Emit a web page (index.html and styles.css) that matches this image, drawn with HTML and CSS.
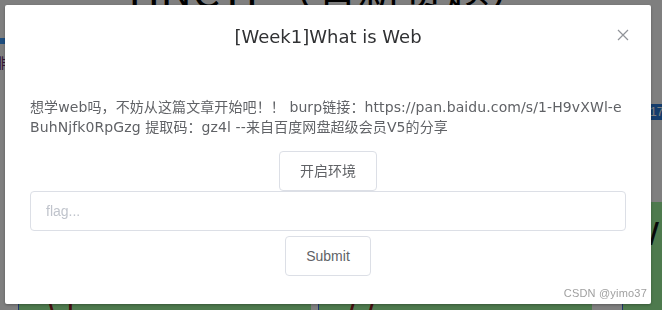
FILE: index.html
```html
<!DOCTYPE html>
<html lang="zh-CN">
<head>
<meta charset="utf-8">
<title>[Week1]What is Web</title>
<link rel="stylesheet" href="styles.css">
</head>
<body>
<div class="page">
  <h1 class="page-title">HNCTF（有新赛题）</h1>
  <div class="nav"></div>
  <div class="info-row">
    <span class="side-text">排</span>
    <span class="badge">17</span>
  </div>
  <div class="cards">
    <div class="card"><span class="card-glyph red">\ |</span></div>
    <div class="card"><span class="card-glyph red">/ /</span></div>
    <div class="card-gap"></div>
    <div class="card card-right"><span class="card-glyph">W</span></div>
  </div>
</div>

<div class="overlay"></div>

<div class="dialog-wrapper">
  <div class="dialog">
    <div class="dialog-header">
      <span class="dialog-title">[Week1]What is Web</span>
      <button class="dialog-close" aria-label="Close">
        <svg width="12" height="12" viewBox="0 0 12 12"><path d="M1 1L11 11M11 1L1 11" stroke="#909399" stroke-width="1.2" fill="none"/></svg>
      </button>
    </div>
    <div class="dialog-body">
      <p class="desc">想学web吗，不妨从这篇文章开始吧！！ burp链接：https://pan.baidu.com/s/1-H9vXWl-eBuhNjfk0RpGzg 提取码：gz4l --来自百度网盘超级会员V5的分享</p>
      <div class="center"><button class="btn">开启环境</button></div>
      <input class="input" type="text" placeholder="flag...">
      <div class="center"><button class="btn btn-submit">Submit</button></div>
    </div>
  </div>
</div>

<div class="watermark">CSDN @yimo37</div>
</body>
</html>
```

FILE: styles.css
```css
* { box-sizing: border-box; }
html, body { margin: 0; padding: 0; }
body {
  width: 662px;
  height: 310px;
  overflow: hidden;
  background: #ffffff;
  font-family: "DejaVu Sans", "Noto Sans CJK SC", sans-serif;
}

/* background page */
.page { width: 662px; }
.page-title {
  margin: -34px 0 0;
  height: 72px;
  font-family: "Noto Sans CJK SC", sans-serif;
  font-weight: 400;
  font-size: 44px;
  line-height: 1;
  text-align: center;
  color: #000;
}
.nav {
  width: 320px;
  height: 6px;
  background: #3e9cfe;
}
.info-row {
  display: flex;
  justify-content: space-between;
  align-items: flex-start;
  height: 158px;
  padding-top: 8px;
}
.side-text {
  font-family: "Noto Sans CJK SC", sans-serif;
  font-size: 14px;
  color: #6a2a6a;
  margin-left: -8px;
}
.badge {
  margin-top: 52px;
  background: #2a7ad8;
  color: #fff;
  font-family: "Liberation Sans", sans-serif;
  font-size: 12px;
  padding: 1px 2px 1px 4px;
  width: 16px;
  height: 16px;
  line-height: 14px;
}
.cards {
  display: flex;
  gap: 7px;
  padding-left: 18px;
}
.card {
  width: 308px;
  height: 120px;
  background: #9cf59c;
  border-left: 1px solid #3e6cd8;
  overflow: hidden;
}
.card + .card { width: 288px; }
.card-gap {
  width: 24px;
  flex: none;
  margin-left: -6px;
}
.card-right {
  width: 40px;
  flex: none;
  margin-left: -2px;
}
.card-glyph {
  display: block;
  font-family: "Liberation Sans", sans-serif;
  font-size: 34px;
  line-height: 1;
  padding: 14px 0 0 4px;
  color: #111;
}
.card-glyph.red { color: #8a2020; padding-top: 90px; padding-left: 28px; }

.overlay {
  position: fixed;
  inset: 0;
  background: rgba(0, 0, 0, 0.5);
}

/* dialog */
.dialog-wrapper {
  position: fixed;
  inset: 0;
  padding: 5px 0 0 5px;
}
.dialog {
  position: relative;
  width: 646px;
  height: 299px;
  background: #fff;
  border-radius: 2px;
  box-shadow: 0 1px 3px rgba(0, 0, 0, 0.3);
}
.dialog-header {
  padding: 20px 20px 10px;
  text-align: center;
}
.dialog-title {
  font-size: 18px;
  line-height: 24px;
  color: #303133;
}
.dialog-close {
  position: absolute;
  top: 22px;
  right: 20px;
  width: 16px;
  height: 16px;
  padding: 0;
  border: 0;
  background: transparent;
  display: flex;
  align-items: center;
  justify-content: center;
}
.dialog-body {
  padding: 38px 25px 0;
  color: #606266;
  font-size: 14px;
}
.desc {
  margin: 0 0 14px;
  line-height: 20px;
  letter-spacing: 0.1px;
  word-break: break-all;
}
.center {
  display: flex;
  justify-content: center;
}
.btn {
  height: 40px;
  padding: 0 20px;
  border: 1px solid #dcdfe6;
  border-radius: 4px;
  background: #fff;
  color: #606266;
  font-family: "Liberation Sans", "Noto Sans CJK SC", sans-serif;
  font-size: 14px;
  line-height: 1;
}
.btn-submit { margin-top: 5px; }
.input {
  display: block;
  width: 100%;
  height: 40px;
  padding: 0 15px;
  border: 1px solid #dcdfe6;
  border-radius: 4px;
  font-family: "Liberation Sans", "Noto Sans CJK SC", sans-serif;
  font-size: 14px;
  color: #606266;
  outline: none;
}
.input::placeholder { color: #c0c4cc; }

.watermark {
  position: fixed;
  right: 15px;
  bottom: 11px;
  font-family: "Liberation Sans", sans-serif;
  font-size: 11px;
  color: #a0a0a0;
  letter-spacing: 0.2px;
}
```
